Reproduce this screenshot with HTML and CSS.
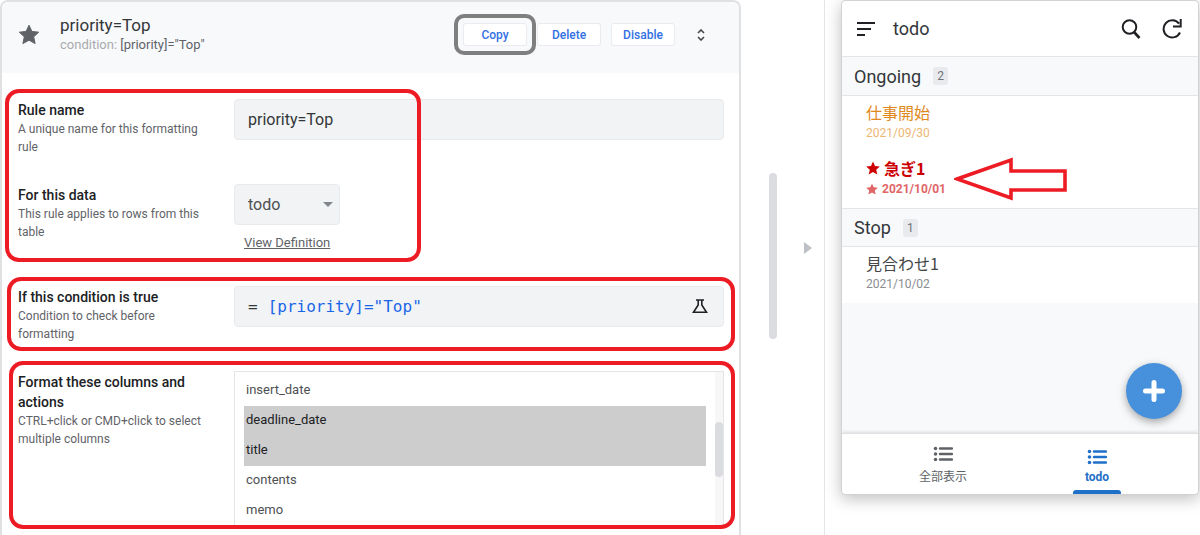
FILE: index.html
```html
<!DOCTYPE html>
<html lang="ja">
<head>
<meta charset="utf-8">
<title>Format rules</title>
<link rel="stylesheet" href="styles.css">
</head>
<body>
<main class="editor">
  <section class="card">
    <header class="card-header">
      <svg class="rule-star" viewBox="0 0 22 22" aria-hidden="true"><path d="M11 1.200l2.900 6.200 6.800.8-5 4.600 1.400 6.800L11 16.200l-6.100 3.400 1.400-6.800-5-4.600 6.800-.8z" fill="#5f6368" stroke="#5f6368" stroke-linejoin="round"/></svg>
      <div class="rule-title">
        <h1>priority=Top</h1>
        <p>condition: <span>[priority]="Top"</span></p>
      </div>
      <div class="actions">
        <div class="marked"><button type="button">Copy</button><span class="mark mark-copy"></span></div>
        <button type="button">Delete</button>
        <button type="button">Disable</button>
        <svg class="reorder" viewBox="0 0 8 12" aria-hidden="true"><path d="M1 4l3-3 3 3M1 8l3 3 3-3" fill="none" stroke="#444746" stroke-width="1.600"/></svg>
      </div>
    </header>
    <form class="fields">
      <div class="marked">
        <div class="field">
          <div class="caption"><label for="name">Rule name</label><p>A unique name for this formatting rule</p></div>
          <input id="name" class="box" type="text" value="priority=Top">
        </div>
        <div class="field">
          <div class="caption"><label for="table">For this data</label><p>This rule applies to rows from this table</p></div>
          <div class="source">
            <div class="picker">
              <select id="table" class="box"><option>todo</option></select>
              <svg viewBox="0 0 10 5" aria-hidden="true"><path d="M0 0h10L5 5z" fill="#80868b"/></svg>
            </div>
            <a href="#">View Definition</a>
          </div>
        </div>
        <span class="mark mark-data"></span>
      </div>
      <div class="marked field">
        <div class="caption"><label for="cond">If this condition is true</label><p>Condition to check before formatting</p></div>
        <div class="box expression">
          <span>=</span>
          <input id="cond" type="text" value='[priority]="Top"'>
          <svg viewBox="0 0 16 15" aria-hidden="true"><path d="M4 1h8M6.200 1v5L1.500 13.300h13L9.800 6V1" fill="none" stroke="#202124" stroke-width="1.600"/></svg>
        </div>
        <span class="mark mark-condition"></span>
      </div>
      <div class="marked field">
        <div class="caption"><label for="columns">Format these columns and actions</label><p>CTRL+click or CMD+click to select multiple columns</p></div>
        <div class="listbox">
          <select id="columns" multiple size="5">
            <option>insert_date</option>
            <option selected>deadline_date</option>
            <option selected>title</option>
            <option>contents</option>
            <option>memo</option>
          </select>
          <div class="track"><div class="thumb"></div></div>
        </div>
        <span class="mark mark-columns"></span>
      </div>
    </form>
  </section>
  <div class="gutter">
    <div class="page-thumb"></div>
    <svg class="expand" viewBox="0 0 8 12" aria-hidden="true"><path d="M0 0l8 6-8 6z" fill="#bdc1c6"/></svg>
  </div>
</main>
<aside class="preview">
  <div class="phone">
    <header class="app-bar">
      <svg class="menu" viewBox="0 0 18 14" aria-hidden="true"><path d="M0 1h18M0 7h14M0 13h8" stroke="#202124" stroke-width="2.200"/></svg>
      <h2>todo</h2>
      <svg class="search" viewBox="0 0 20 20" aria-hidden="true"><g fill="none" stroke="#202124" stroke-width="2"><circle cx="8.500" cy="8" r="6.800"/><path d="M13 13l5.500 6" stroke-width="2.600"/></g></svg>
      <svg class="refresh" viewBox="0 0 22 20" aria-hidden="true"><path d="M19 13.500A8.600 8.600 0 1 1 18 4.600M19.700 0v7.600h-7.700" fill="none" stroke="#202124" stroke-width="2"/></svg>
    </header>
    <div class="list">
      <h3>Ongoing <span>2</span></h3>
      <article class="item orange"><h4>仕事開始</h4><p>2021/09/30</p></article>
      <article class="item urgent">
        <h4><svg viewBox="0 0 14 14" aria-hidden="true"><path d="M7 .5l2 4.500 4.800.5-3.600 3.200 1.100 4.800L7 11l-4.300 2.500 1.100-4.800L.2 5.500 5 5z" fill="#c00"/></svg>急ぎ1</h4>
        <p><svg viewBox="0 0 14 14" aria-hidden="true"><path d="M7 .5l2 4.500 4.800.5-3.600 3.200 1.100 4.800L7 11l-4.300 2.500 1.100-4.800L.2 5.500 5 5z" fill="#e06666"/></svg>2021/10/01</p>
        <svg class="arrow" viewBox="0 0 114 44" aria-hidden="true"><path d="M3 22L57 3v11h54v19H57v8z" fill="#fff" stroke="#ed1c24" stroke-width="3.600"/></svg>
      </article>
      <h3>Stop <span>1</span></h3>
      <article class="item"><h4>見合わせ1</h4><p>2021/10/02</p></article>
      <button class="add" type="button" aria-label="Add"><svg viewBox="0 0 22 22"><path d="M11 2.500v17M2.500 11h17" stroke="#fff" stroke-width="5" stroke-linecap="round"/></svg></button>
    </div>
    <nav class="tabs">
      <a href="#"><svg viewBox="0 0 20 16" aria-hidden="true"><path d="M7 2.500h12M7 8h12M7 13.500h12" stroke="currentColor" stroke-width="2.400" stroke-linecap="round"/><g fill="currentColor"><circle cx="2.500" cy="2.500" r="1.800"/><circle cx="2.500" cy="8" r="1.800"/><circle cx="2.500" cy="13.500" r="1.800"/></g></svg>全部表示</a>
      <a href="#" class="current"><svg viewBox="0 0 20 16" aria-hidden="true"><path d="M7 2.500h12M7 8h12M7 13.500h12" stroke="currentColor" stroke-width="2.400" stroke-linecap="round"/><g fill="currentColor"><circle cx="2.500" cy="2.500" r="1.800"/><circle cx="2.500" cy="8" r="1.800"/><circle cx="2.500" cy="13.500" r="1.800"/></g></svg>todo</a>
    </nav>
  </div>
</aside>
</body>
</html>
```
FILE: styles.css
```css
* { box-sizing: border-box; }
body {
  margin: 0;
  display: flex;
  min-height: 100vh;
  background: #fff;
  color: #202124;
  font-family: Roboto, "Noto Sans CJK JP", sans-serif;
}
h1, h2, h3, h4, p { margin: 0; font-weight: 400; }
button, input, select { font-family: inherit; }
svg { display: block; flex: none; }

.editor { flex: 1; display: flex; min-width: 0; }
.card {
  flex: 1;
  min-width: 0;
  border: 2px solid #e0e1e3;
  border-bottom: 0;
  border-radius: 8px 8px 0 0;
}
.card-header {
  display: flex;
  align-items: center;
  height: 71px;
  padding: 0 34px 6px 16px;
  background: #f8f9fb;
  border-radius: 6px 6px 0 0;
}
.rule-star { width: 22px; height: 22px; margin-right: 20px; }
.rule-title { flex: 1; }
.rule-title h1 { font-size: 17px; line-height: 20px; color: #333639; }
.rule-title p { font-size: 13px; line-height: 20px; color: #a8abae; }
.rule-title span { color: #5f6368; }
.actions { display: flex; align-items: center; gap: 10px; }
.actions button {
  display: block;
  width: 64px;
  height: 23px;
  padding: 0;
  border: 1px solid #eaebee;
  border-radius: 3px;
  background: #fff;
  color: #3270e3;
  font-size: 12px;
  font-weight: 500;
}
.reorder { width: 8px; height: 12px; margin-left: 12px; }

.marked { position: relative; }
.mark {
  position: absolute;
  border: 4px solid #ed1c24;
  border-radius: 14px;
  pointer-events: none;
}
.mark-copy { inset: -9px; border-color: #7f7f7f; border-radius: 10px; }
.mark-data { inset: -10px auto 24px -13px; width: 416px; }
.mark-condition { inset: -9px -11px 20px -11px; }
.mark-columns { inset: -10px -11px -3px -9px; }

.fields { padding: 26px 15px 8px 16px; }
.field { display: grid; grid-template-columns: 216px 1fr; align-items: start; padding-bottom: 28px; }
.field:last-child { padding-bottom: 0; }
.caption { padding: 1px 24px 0 0; }
.caption label { display: block; font-size: 14px; font-weight: 500; line-height: 20px; }
.caption p { font-size: 12px; line-height: 18px; color: #5f6368; }
.box {
  width: 100%;
  height: 41px;
  padding: 0 13px;
  border: 1px solid #e8eaed;
  border-radius: 4px;
  background: #f1f3f4;
  color: #333639;
  font-size: 16px;
}
.source { display: flex; flex-direction: column; align-items: flex-start; gap: 9px; padding-bottom: 6px; }
.source a { margin-left: 10px; font-size: 13px; line-height: 18px; color: #5f6368; }
.picker { position: relative; width: 106px; }
.picker select { appearance: none; color: #4d5053; }
.picker svg { position: absolute; right: 7px; top: 18px; width: 10px; height: 5px; pointer-events: none; }
.expression { display: flex; align-items: center; gap: 10px; padding-right: 15px; font-family: "DejaVu Sans Mono", monospace; }
.expression input {
  flex: 1;
  min-width: 0;
  padding: 0;
  border: 0;
  background: none;
  color: #1a66e8;
  font: 16px "DejaVu Sans Mono", monospace;
}
.expression svg { width: 16px; height: 15px; }
.listbox { display: flex; height: 155px; border: 1px solid #e3e5e8; border-bottom: 0; }
.listbox select {
  flex: 1;
  height: 154px;
  padding: 4px 9px 0;
  border: 0;
  outline: 0;
  overflow: hidden;
  font-size: 13px;
  color: #4d5053;
}
.listbox option { height: 30px; padding: 6px 2px 0; }
.listbox option:checked { background: #cdcdcd; color: #202124; }
.track { width: 8px; padding-top: 50px; background: #f7f7f7; }
.thumb { height: 55px; border-radius: 4px; background: #dadce0; }

.gutter { display: flex; flex: 0 0 83px; padding: 173px 12px 0 28px; justify-content: space-between; }
.page-thumb { width: 8px; height: 166px; border-radius: 4px; background: #dadce0; }
.expand { width: 8px; height: 12px; margin-top: 69px; }

.preview { display: flex; flex: 0 0 376px; padding: 0 1px 40px 16px; border-left: 1px solid #e3e5e8; }
.phone {
  flex: 1;
  display: flex;
  flex-direction: column;
  border: 1px solid #d0d2d4;
  border-radius: 4px;
  background: #fff;
  box-shadow: 0 4px 16px rgba(0, 0, 0, .25);
  overflow: hidden;
}
.app-bar { display: flex; align-items: center; height: 56px; padding: 0 15px; border-bottom: 1px solid #e3e5e8; }
.app-bar h2 { flex: 1; margin-left: 18px; font-size: 18px; color: #333639; }
.menu { width: 18px; height: 14px; }
.search { width: 20px; height: 20px; margin-right: 20px; }
.refresh { width: 22px; height: 20px; }
.list { position: relative; flex: 1; background: #f8f9fb; }
.list h3 {
  display: flex;
  align-items: center;
  gap: 12px;
  height: 39px;
  padding: 0 12px;
  border-bottom: 1px solid #e3e5e8;
  font-size: 18px;
  color: #333639;
}
.list h3 span {
  min-width: 15px;
  border-radius: 3px;
  background: #e8eaed;
  color: #6f7378;
  font-size: 12px;
  line-height: 18px;
  text-align: center;
}
.item { position: relative; height: 56px; padding: 4px 24px; background: #fff; }
.item + h3 { border-top: 1px solid #e3e5e8; }
.item h4 {
  display: flex;
  align-items: center;
  gap: 4px;
  font-size: 16px;
  line-height: 24px;
  color: #444746;
  font-family: "Noto Sans CJK JP", sans-serif;
}
.item p { display: flex; align-items: center; gap: 4px; font-size: 12px; line-height: 18px; color: #8a8d91; }
.item.orange h4 { color: #e08a1e; }
.item.orange p { color: #ecb673; }
.item.urgent h4 { color: #c00; font-weight: 700; }
.item.urgent p { color: #e06666; font-weight: 700; }
.urgent h4 svg { width: 14px; height: 14px; }
.urgent p svg { width: 12px; height: 12px; }
.item .arrow { position: absolute; left: 112px; top: 5px; width: 114px; height: 44px; }
.add {
  position: absolute;
  right: 16px;
  bottom: 14px;
  display: grid;
  place-items: center;
  width: 56px;
  height: 56px;
  padding: 0;
  border: 0;
  border-radius: 50%;
  background: #4790dc;
  box-shadow: 0 3px 8px rgba(0, 0, 0, .35);
}
.add svg { width: 22px; height: 22px; }
.tabs {
  position: relative;
  display: flex;
  justify-content: center;
  height: 61px;
  padding: 0 24px;
  border-top: 1px solid #dfe1e4;
  box-shadow: 0 -1px 3px rgba(0, 0, 0, .12);
}
.tabs a {
  flex: 1;
  display: flex;
  flex-direction: column;
  align-items: center;
  gap: 7px;
  padding-top: 12px;
  color: #5f6368;
  font-size: 12px;
  line-height: 16px;
  text-decoration: none;
}
.tabs svg { width: 20px; height: 16px; }
.tabs .current { position: relative; padding-top: 15px; gap: 4px; color: #1f70c8; font-weight: 700; }
.tabs .current::after {
  content: "";
  position: absolute;
  bottom: 0;
  width: 48px;
  height: 4px;
  border-radius: 3px 3px 0 0;
  background: #1f70c8;
}
```
